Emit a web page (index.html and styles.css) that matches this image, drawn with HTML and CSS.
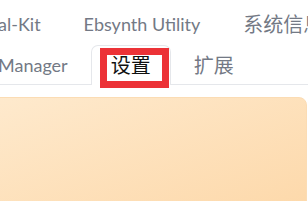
FILE: index.html
```html
<!DOCTYPE html>
<html lang="zh">
<head>
  <meta charset="UTF-8">
  <title>设置</title>
  <link rel="stylesheet" href="styles.css">
</head>
<body>
  <div class="app">
    <div class="tab-nav">
      <div class="tab-row">
        <button class="tab">al-Kit</button>
        <button class="tab">Ebsynth Utility</button>
        <button class="tab cjk">系统信息</button>
      </div>
      <div class="tab-row">
        <button class="tab">Manager</button>
        <button class="tab cjk selected">设置<span class="mark"></span></button>
        <button class="tab cjk">扩展</button>
      </div>
    </div>

    <div class="panel">
      <button class="primary"></button>
    </div>
  </div>
</body>
</html>
```

FILE: styles.css
```css
* {
  box-sizing: border-box;
}

html, body {
  height: 100%;
}

body {
  margin: 0;
  font-family: "Lato", "Noto Sans CJK SC", sans-serif;
  background: #fff;
  overflow: hidden;
}

.app {
  margin-left: -22px;
}

.tab-nav {
  display: flex;
  flex-direction: column;
  gap: 2px;
  padding-top: 4px;
  border-bottom: 1px solid #e5e7eb;
}

.tab-row {
  display: flex;
  gap: 3px;
}

.tab {
  position: relative;
  font: inherit;
  font-size: 18px;
  line-height: 30px;
  padding: 4px 19px;
  border: 1px solid transparent;
  border-bottom: none;
  border-radius: 7px 7px 0 0;
  background: none;
  color: #737985;
  white-space: nowrap;
}

.tab.cjk {
  font-size: 20px;
}

.tab.selected {
  color: #111;
  background: #fff;
  border-color: #e5e7eb;
  padding-bottom: 5px;
  margin-bottom: -1px;
}

/* red highlight drawn over the active tab */
.mark {
  position: absolute;
  left: 8px;
  top: 2px;
  width: 69px;
  height: 40px;
  border: 7px solid #ec3237;
}

.panel {
  padding: 12px 1px 0 0;
}

.primary {
  display: block;
  width: 100%;
  height: 120px;
  border: 1px solid #fbdcb4;
  border-radius: 8px;
  background: linear-gradient(160deg, #feeace 0%, #fdd8a9 100%);
}
```
